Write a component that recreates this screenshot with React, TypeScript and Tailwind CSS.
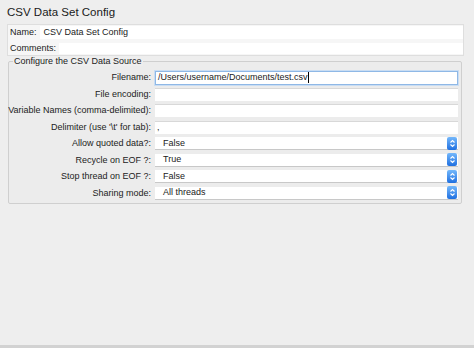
import React from 'react';

const font = { fontFamily: '"Lucida Grande", "Liberation Sans", Arial, sans-serif' };

type Row = { label: string; value: string; kind: 'text' | 'select'; focused?: boolean };

const rows: Row[] = [
  { label: 'Filename:', value: '/Users/username/Documents/test.csv', kind: 'text', focused: true },
  { label: 'File encoding:', value: '', kind: 'text' },
  { label: 'Variable Names (comma-delimited):', value: '', kind: 'text' },
  { label: "Delimiter (use '\\t' for tab):", value: ',', kind: 'text' },
  { label: 'Allow quoted data?:', value: 'False', kind: 'select' },
  { label: 'Recycle on EOF ?:', value: 'True', kind: 'select' },
  { label: 'Stop thread on EOF ?:', value: 'False', kind: 'select' },
  { label: 'Sharing mode:', value: 'All threads', kind: 'select' },
];

const Stepper = () => (
  <div className="w-[10px] h-[13px] rounded-[2px] bg-gradient-to-b from-[#74b8fb] to-[#1d6fe0] flex items-center justify-center">
    <svg width="7" height="9" viewBox="0 0 7 9" fill="none" stroke="white" strokeWidth="1.1">
      <path d="M1.5 3.5 L3.5 1.5 L5.5 3.5" />
      <path d="M1.5 5.5 L3.5 7.5 L5.5 5.5" />
    </svg>
  </div>
);

const Field = ({ row }: { row: Row }) => {
  if (row.kind === 'select') {
    return (
      <div className="flex-1 h-[13px] bg-white border-b border-[#c8c8c8] flex items-center justify-between pl-[8px] pr-[1px]">
        <span>{row.value}</span>
        <Stepper />
      </div>
    );
  }
  return (
    <div
      className={
        row.focused
          ? 'flex-1 h-[14px] bg-white border border-[#8fb8e6] shadow-[0_0_0_1px_#c9ddf3] flex items-center pl-[2px]'
          : 'flex-1 h-[13px] bg-white border-t border-[#d8d8d8] flex items-center pl-[2px]'
      }
    >
      <span className="whitespace-nowrap">{row.value}</span>
      {row.focused && <span className="w-px h-[11px] bg-black" />}
    </div>
  );
};

export default function App() {
  return (
    <div className="w-[474px] h-[348px] bg-[#eeeeee] text-[#222] flex flex-col text-[9px] leading-none" style={font}>
      <div className="flex-1 flex flex-col px-[7px]">
        <div className="h-[24px] flex items-center text-[11.5px] pt-[2px] text-[#1a1a1a]">CSV Data Set Config</div>
        <div className="mr-[3px] border border-[#dedede] bg-[#f6f6f6] flex flex-col gap-[3px] py-[1px]">
          <div className="flex items-center gap-[3px] h-[13px]">
            <span className="pl-[2px] shrink-0">Name:</span>
            <div className="flex-1 h-[13px] bg-white flex items-center pl-[4px]">CSV Data Set Config</div>
          </div>
          <div className="flex items-center gap-[3px] h-[12px]">
            <span className="pl-[2px] shrink-0">Comments:</span>
            <div className="flex-1 h-[11px] bg-white" />
          </div>
        </div>
        <div className="relative mt-[5px] ml-[1px] mr-[5px] border border-[#cfcfcf] rounded-[2px] bg-[#ececec] pt-[9px] pb-[3px] pr-[3px] flex flex-col gap-[3.5px]">
          <span className="absolute -top-[5px] left-[4px] px-[1px] bg-[#eeeeee]">Configure the CSV Data Source</span>
          {rows.map((r) => (
            <div key={r.label} className="flex items-center h-[13px]">
              <span className="w-[146px] shrink-0 flex justify-end pr-[4px] whitespace-nowrap">{r.label}</span>
              <Field row={r} />
            </div>
          ))}
        </div>
      </div>
      <div className="h-[3px] bg-[#d2d2d2]" />
    </div>
  );
}
